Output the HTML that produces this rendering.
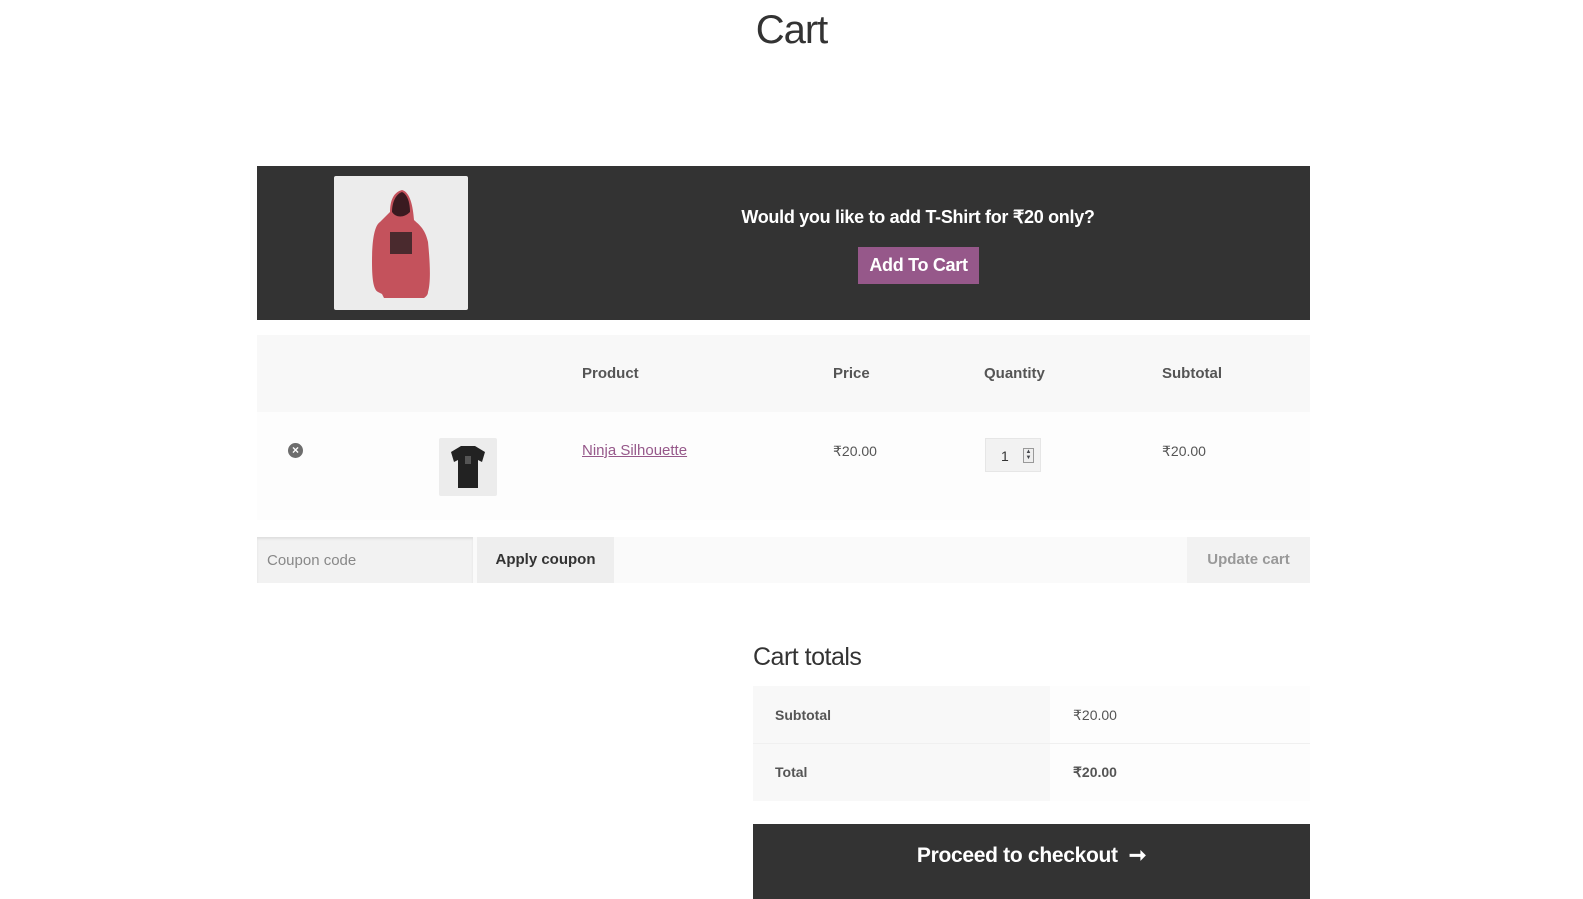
<!DOCTYPE html>
<html><head><meta charset="utf-8"><style>
body{margin:0;width:1583px;height:899px;background:#fff;font-family:"Liberation Sans",sans-serif;color:#43454b;position:relative;overflow:hidden}
.a{position:absolute}
</style></head><body>
<div class="a" style="left:0;width:1583px;top:8px;text-align:center;font-size:40px;font-weight:300;color:#333;letter-spacing:-1px">Cart</div>

<div class="a" style="left:257px;top:166px;width:1053px;height:154px;background:#333"></div>
<div class="a" style="left:334px;top:176px;width:134px;height:134px;background:#ececec;border-radius:2px"></div>
<svg class="a" style="left:360px;top:186px" width="80" height="115" viewBox="0 0 80 115">
<path d="M42 4c-8 2-12 10-12 22l-10 10c-6 4-8 20-8 40s2 28 6 30l4 2 2 4h40c3-2 4-4 4-6 3-10 2-30 0-50-3-14-10-18-14-22-1-14-4-28-12-30z" fill="#c4525c"/>
<path d="M42 6c-6 2-10 10-10 20 4 6 12 6 18 0 0-10-3-18-8-20z" fill="#3a1a20"/>
<rect x="30" y="46" width="22" height="22" fill="#4a2a2e"/>
</svg>
<div class="a" style="left:600px;width:636px;top:207px;text-align:center;color:#fff;font-size:18px;font-weight:bold;letter-spacing:-0.3px">Would you like to add T-Shirt for ₹20 only?</div>
<div class="a" style="left:858px;top:247px;width:121px;height:37px;background:#96588a;color:#fff;font-weight:bold;font-size:18px;line-height:37px;text-align:center;letter-spacing:-0.3px">Add To Cart</div>

<div class="a" style="left:257px;top:335px;width:1053px;height:77px;background:#f8f8f8"></div>
<div class="a" style="left:257px;top:412px;width:1053px;height:108px;background:#fdfdfd"></div>
<div class="a" style="top:365px;left:582px;font-size:15px;font-weight:bold;color:#555">Product</div>
<div class="a" style="top:365px;left:833px;font-size:15px;font-weight:bold;color:#555">Price</div>
<div class="a" style="top:365px;left:984px;font-size:15px;font-weight:bold;color:#555">Quantity</div>
<div class="a" style="top:365px;left:1162px;font-size:15px;font-weight:bold;color:#555">Subtotal</div>

<div class="a" style="left:288px;top:443px;width:15px;height:15px;border-radius:50%;background:#6d6d6d;color:#fff;font-size:12px;line-height:15px;text-align:center;font-weight:bold">×</div>
<div class="a" style="left:439px;top:438px;width:58px;height:58px;background:#ececec;border-radius:2px"></div>
<svg class="a" style="left:449px;top:444px" width="38" height="46" viewBox="0 0 38 46"><path d="M12 2h14l10 6-3 10-4-2v28H9V16l-4 2-3-10z" fill="#222"/><rect x="16" y="12" width="6" height="8" fill="#555"/></svg>
<div class="a" style="top:442px;left:582px;font-size:15px;color:#96588a;text-decoration:underline">Ninja Silhouette</div>
<div class="a" style="top:443px;left:833px;font-size:14px;color:#555">₹20.00</div>
<div class="a" style="top:443px;left:1162px;font-size:14px;color:#555">₹20.00</div>
<div class="a" style="left:985px;top:438px;width:56px;height:34px;background:#f2f2f2;border:1px solid #e6e6e6;box-sizing:border-box"></div>
<div class="a" style="left:1001px;top:448px;font-size:14px;color:#333">1</div>
<div class="a" style="left:1023px;top:448px;width:11px;height:15px;border:1px solid #999;box-sizing:border-box;background:#eee;font-size:6px;line-height:6px;text-align:center">▲<br>▼</div>

<div class="a" style="left:257px;top:537px;width:1053px;height:46px;background:#fafafa"></div>
<div class="a" style="left:257px;top:537px;width:216px;height:46px;background:#f2f2f2;box-shadow:inset 0 2px 2px rgba(0,0,0,.08)"></div>
<div class="a" style="left:267px;top:552px;font-size:15px;color:#888">Coupon code</div>
<div class="a" style="left:477px;top:537px;width:137px;height:46px;background:#eee;font-size:15px;font-weight:bold;color:#333;line-height:46px;text-align:center">Apply coupon</div>
<div class="a" style="left:1187px;top:537px;width:123px;height:46px;background:#f2f2f2;font-size:15px;font-weight:bold;color:#999;line-height:46px;text-align:center">Update cart</div>

<div class="a" style="left:753px;top:643px;font-size:25px;font-weight:300;color:#333;letter-spacing:-0.5px">Cart totals</div>
<div class="a" style="left:753px;top:686px;width:297px;height:115px;background:#f8f8f8"></div>
<div class="a" style="left:1050px;top:686px;width:260px;height:115px;background:#fdfdfd"></div>
<div class="a" style="left:753px;top:743px;width:557px;height:1px;background:#f0f0f0"></div>
<div class="a" style="left:775px;top:707px;font-size:14px;font-weight:bold;color:#555">Subtotal</div>
<div class="a" style="left:775px;top:764px;font-size:14px;font-weight:bold;color:#555">Total</div>
<div class="a" style="left:1073px;top:707px;font-size:14px;color:#555">₹20.00</div>
<div class="a" style="left:1073px;top:764px;font-size:14px;font-weight:bold;color:#555">₹20.00</div>

<div class="a" style="left:753px;top:824px;width:557px;height:75px;background:#333;color:#fff;font-size:21px;font-weight:bold;text-align:center;line-height:64px;letter-spacing:-0.3px">Proceed to checkout &nbsp;➞</div>
</body></html>
